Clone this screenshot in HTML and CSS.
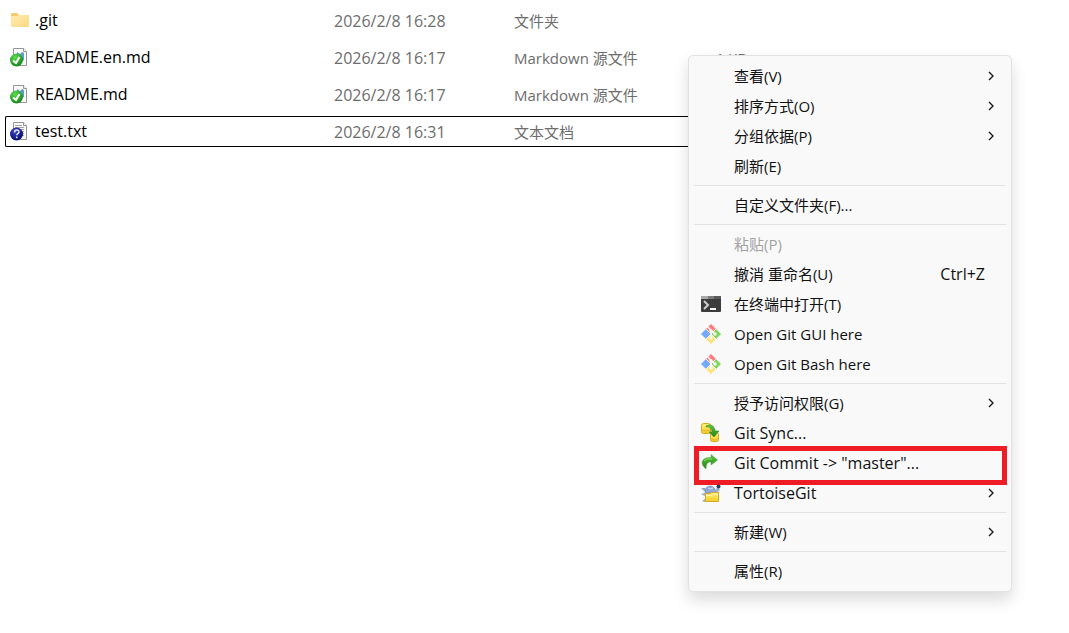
FILE: index.html
```html
<!DOCTYPE html>
<html lang="zh-CN">
<head>
  <meta charset="UTF-8" />
  <meta name="viewport" content="width=device-width, initial-scale=1" />
  <title>test</title>
  <link rel="stylesheet" href="styles.css">
</head>
<body>
  <!-- shared icons -->
  <svg class="sprite" aria-hidden="true">
    <defs>
      <linearGradient id="gFolder" x1="0" y1="0" x2="1" y2="1">
        <stop offset="0" stop-color="#ffebb0" />
        <stop offset="1" stop-color="#fbd981" />
      </linearGradient>
      <radialGradient id="gGreen" cx="0.4" cy="0.3" r="0.7">
        <stop offset="0" stop-color="#5fdc4e" />
        <stop offset="1" stop-color="#13861a" />
      </radialGradient>
      <radialGradient id="gBlue" cx="0.4" cy="0.3" r="0.7">
        <stop offset="0" stop-color="#3d48c8" />
        <stop offset="1" stop-color="#070a70" />
      </radialGradient>
      <linearGradient id="gArrow" x1="0" y1="0" x2="0" y2="1">
        <stop offset="0" stop-color="#5cc93c" />
        <stop offset="1" stop-color="#23821b" />
      </linearGradient>
      <linearGradient id="gYellow" x1="0" y1="0" x2="0" y2="1">
        <stop offset="0" stop-color="#ffef7c" />
        <stop offset="1" stop-color="#f3cc22" />
      </linearGradient>
    </defs>
    <symbol id="folder" viewBox="0 0 20 20">
      <path d="M1 3q0-1 1-1h5l2 2h9q1 0 1 1v10H1z" fill="#f3cb6b" />
      <path d="M1 5h7l1-1h9q1 0 1 1v10q0 1-1 1H2q-1 0-1-1z" fill="url(#gFolder)" />
    </symbol>
    <symbol id="md" viewBox="0 0 20 20">
      <path d="M3.500 0.500h10l3 3v14h-13z" fill="#fafafa" stroke="#959595" />
      <path d="M13.500 0.500v3h3" fill="#fff" stroke="#959595" />
      <path d="M7 4l3 2 2-2 2 1v7l-3 1-4-4z" fill="#5d9fc4" />
      <circle cx="6.500" cy="12" r="6.500" fill="url(#gGreen)" />
      <path d="M3 12.500l3 2.500 3.500-6" fill="none" stroke="#fff" stroke-width="2" />
    </symbol>
    <symbol id="txt" viewBox="0 0 20 20">
      <path d="M3.500 0.500h10l3 3v14h-13z" fill="#fafafa" stroke="#959595" />
      <path d="M13.500 0.500v3h3" fill="#fff" stroke="#959595" />
      <path d="M5 3.500h7M5 5.500h9M5 7.500h9M5 9.500h9M5 11.500h9M5 13.500h9" stroke="#a4a4a4" />
      <circle cx="6.500" cy="12" r="6.500" fill="url(#gBlue)" />
      <path d="M4.500 10.500q0-2.500 2.300-2.500T9 10q0 1-1.200 1.700-1 .6-1 1.600M6.700 14.500v1.700" fill="none" stroke="#e6e8ff" stroke-width="1.500" />
    </symbol>
    <symbol id="terminal" viewBox="0 0 20 20">
      <rect y="2" width="20" height="16" rx="1" fill="#3c3c3c" />
      <path d="M0 5V3q0-1 1-1h6v3z" fill="#a9a9a9" />
      <path d="M7 2h6v3H7z" fill="#7b7b7b" />
      <path d="M13 2h6q1 0 1 1v2h-7z" fill="#5a5a5a" />
      <path d="M3 7l4 4-4 4" fill="none" stroke="#cfcfcf" stroke-width="2" />
      <path d="M9 15h6" stroke="#f4f4f4" stroke-width="2" />
    </symbol>
    <symbol id="git" viewBox="0 0 20 20">
      <path d="M10 0l5 5-5 5-5-5z" fill="#ff7b7b" />
      <path d="M15 5l5 5-5 5-5-5z" fill="#80d35c" />
      <path d="M15 15l-5 5-5-5 5-5z" fill="#ffe47a" />
      <path d="M5 5l5 5-5 5-5-5z" fill="#74abff" />
      <path d="M4.700 4.700l10.600 10.600M15.300 4.700L4.700 15.300" stroke="#fafafa" stroke-width="1" />
      <path d="M6.500 2.500l3.500 4V14M10 6.500l4 3.500" fill="none" stroke="#fafafa" stroke-width="1.500" />
      <circle cx="10" cy="6.500" r="1.600" fill="#fafafa" />
      <circle cx="10" cy="14" r="1.700" fill="#fafafa" />
      <circle cx="14" cy="10" r="1.700" fill="#fafafa" />
    </symbol>
    <symbol id="sync" viewBox="0 0 20 20">
      <rect x="0.500" y="0.500" width="9" height="10" rx="2" fill="url(#gYellow)" stroke="#d9a91a" />
      <path d="M1 7q4 2 8 0" fill="none" stroke="#dfb52b" />
      <rect x="9.500" y="9.500" width="8" height="9" rx="2" fill="url(#gYellow)" stroke="#d9a91a" />
      <path d="M10 16q4 2 7 0" fill="none" stroke="#dfb52b" />
      <path d="M5 3Q12-1 14.500 8H18l-5 6-5-5h3Q10 3 5 4z" fill="url(#gArrow)" stroke="#358b20" stroke-width="0.500" />
    </symbol>
    <symbol id="commit" viewBox="0 0 20 20">
      <path d="M10 1.500l6.500 5.500L10 12V9q-5-1-5 7-6-5-3-9 2-3 8-2.500z" fill="url(#gArrow)" stroke="#5b9d50" stroke-width="0.500" />
      <path d="M3 8q2-3 8-2" fill="none" stroke="#86dc6b" />
    </symbol>
    <symbol id="tortoise" viewBox="0 0 20 20">
      <path d="M0 5l4 0 2 3H3zM0 11l4-1v3zM1 18l3-2v3z" fill="#8fa8c8" />
      <path d="M4 10q0-7 5-7t6 7z" fill="#8ea6d8" stroke="#6179aa" stroke-width="0.500" />
      <path d="M7 5l2 1 3-1" fill="none" stroke="#d8e2f6" />
      <path d="M14 7l3-3 2 3-3 3z" fill="#9fb5cf" />
      <circle cx="17.500" cy="3.500" r="2" fill="#223f62" />
      <path d="M4.500 10.500h5l1-1h7v9h-13z" fill="url(#gYellow)" stroke="#d7aa26" />
      <path d="M5 12.500h6l1-1h5" fill="none" stroke="#fff4a8" />
    </symbol>
    <symbol id="chevron" viewBox="0 0 8 10">
      <path d="M2 1l4 4-4 4" fill="none" stroke="#1a1a1a" stroke-width="1.400" />
    </symbol>
  </svg>

  <table class="files">
    <colgroup>
      <col class="col-name"><col class="col-date"><col class="col-type"><col class="col-size">
    </colgroup>
    <tbody>
      <tr>
        <td class="name"><svg class="icon"><use href="#folder" /></svg>.git</td>
        <td class="date">2026/2/8 16:28</td>
        <td>文件夹</td>
        <td></td>
      </tr>
      <tr>
        <td class="name"><svg class="icon"><use href="#md" /></svg>README.en.md</td>
        <td class="date">2026/2/8 16:17</td>
        <td>Markdown 源文件</td>
        <td class="size">1 KB</td>
      </tr>
      <tr>
        <td class="name"><svg class="icon"><use href="#md" /></svg>README.md</td>
        <td class="date">2026/2/8 16:17</td>
        <td>Markdown 源文件</td>
        <td></td>
      </tr>
      <tr class="focused">
        <td class="name"><svg class="icon"><use href="#txt" /></svg>test.txt</td>
        <td class="date">2026/2/8 16:31</td>
        <td>文本文档</td>
        <td></td>
      </tr>
    </tbody>
  </table>

  <div class="menu" role="menu">
    <button class="item" role="menuitem"><span class="label">查看(V)</span><svg class="chevron"><use href="#chevron" /></svg></button>
    <button class="item" role="menuitem"><span class="label">排序方式(O)</span><svg class="chevron"><use href="#chevron" /></svg></button>
    <button class="item" role="menuitem"><span class="label">分组依据(P)</span><svg class="chevron"><use href="#chevron" /></svg></button>
    <button class="item" role="menuitem"><span class="label">刷新(E)</span></button>
    <hr>
    <button class="item" role="menuitem"><span class="label">自定义文件夹(F)...</span></button>
    <hr>
    <button class="item" role="menuitem" disabled><span class="label">粘贴(P)</span></button>
    <button class="item" role="menuitem"><span class="label">撤消 重命名(U)</span><span class="key">Ctrl+Z</span></button>
    <button class="item" role="menuitem"><svg class="icon"><use href="#terminal" /></svg><span class="label">在终端中打开(T)</span></button>
    <button class="item" role="menuitem"><svg class="icon"><use href="#git" /></svg><span class="label">Open Git GUI here</span></button>
    <button class="item" role="menuitem"><svg class="icon"><use href="#git" /></svg><span class="label">Open Git Bash here</span></button>
    <hr>
    <button class="item" role="menuitem"><span class="label">授予访问权限(G)</span><svg class="chevron"><use href="#chevron" /></svg></button>
    <button class="item tgit" role="menuitem"><svg class="icon"><use href="#sync" /></svg><span class="label">Git Sync...</span></button>
    <button class="item tgit marked" role="menuitem"><svg class="icon"><use href="#commit" /></svg><span class="label">Git Commit -&gt; "master"...</span></button>
    <button class="item tgit" role="menuitem"><svg class="icon"><use href="#tortoise" /></svg><span class="label">TortoiseGit</span><svg class="chevron"><use href="#chevron" /></svg></button>
    <hr>
    <button class="item" role="menuitem"><span class="label">新建(W)</span><svg class="chevron"><use href="#chevron" /></svg></button>
    <hr>
    <button class="item" role="menuitem"><span class="label">属性(R)</span></button>
  </div>
</body>
</html>
```
FILE: styles.css
```css
* {
  margin: 0;
  padding: 0;
  box-sizing: border-box;
}
body {
  min-height: 100vh;
  background: #fff;
  color: #000;
  font-family: "Open Sans", "Noto Sans CJK SC", sans-serif;
  font-size: 15px;
  line-height: 20px;
}
.sprite {
  position: absolute;
  width: 0;
  height: 0;
}
.icon {
  width: 20px;
  height: 20px;
}

/* file list */
.files {
  width: 752px;
  margin: -1px 0 0 5px;
  table-layout: fixed;
  border-collapse: separate;
  border-spacing: 0 6px;
}
.col-name {
  width: 329px;
}
.col-date {
  width: 180px;
}
.col-type {
  width: 180px;
}
.files td {
  height: 31px;
  color: #6d6d6d;
  white-space: nowrap;
  border: 1px solid transparent;
  border-width: 1px 0;
}
.files .name {
  padding-left: 4px;
  color: #000;
  border-left-width: 1px;
}
.files .name,
.files .date {
  font-size: 16px;
}
.name .icon {
  margin-right: 5px;
  vertical-align: -5px;
}
.files .size {
  padding-right: 10px;
  text-align: right;
}
.files .focused td {
  border-color: #000;
}
.focused .name {
  border-radius: 2px 0 0 2px;
}

/* context menu */
.menu {
  position: absolute;
  top: 55px;
  left: 688px;
  width: 324px;
  padding: 5px;
  background: #f9f9f9;
  border: 1px solid #e2e2e2;
  border-radius: 5px;
  box-shadow: 0 8px 16px rgba(0, 0, 0, 0.14);
}
.item {
  position: relative;
  display: flex;
  align-items: center;
  width: 100%;
  height: 30px;
  padding: 0 11px 0 7px;
  background: none;
  border: 0;
  color: #111;
  font: inherit;
  text-align: left;
}
.item:disabled {
  color: #a2a2a2;
}
.label {
  flex: 1;
  margin-left: 33px;
}
.icon + .label {
  margin-left: 13px;
}
.tgit,
.key {
  font-size: 16px;
}
.key {
  margin-right: 10px;
}
.chevron {
  width: 8px;
  height: 10px;
}
.menu hr {
  margin: 4px 0;
  border: 0;
  border-top: 1px solid #e2e2e2;
}
.marked::after {
  content: "";
  position: absolute;
  top: -2px;
  right: -1px;
  bottom: -7px;
  left: 0;
  border: 5px solid #ee1c24;
}
```
